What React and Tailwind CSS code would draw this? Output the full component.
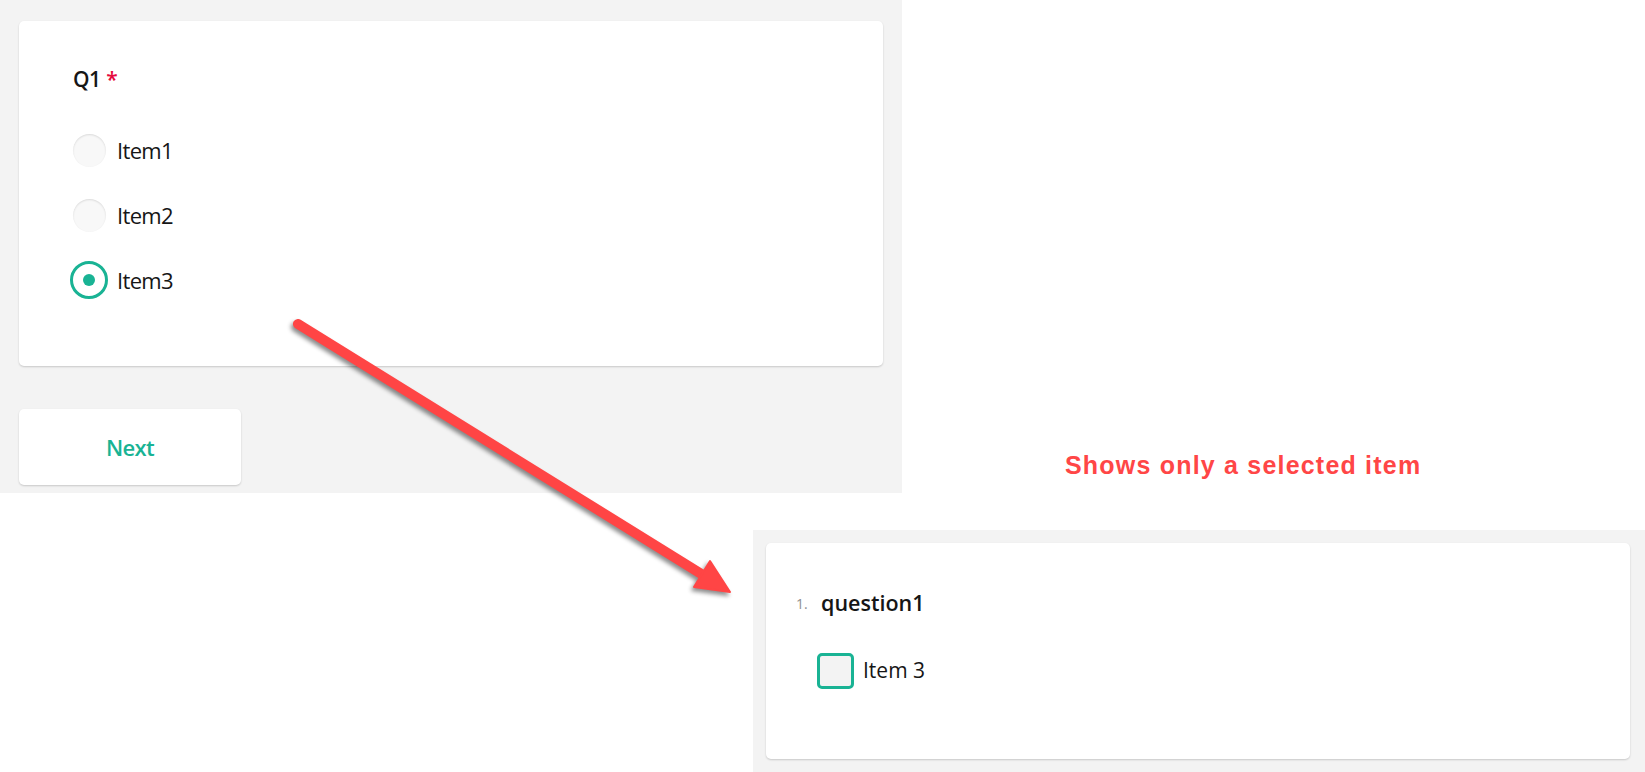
import React from "react";

const surveyFont = { fontFamily: '"Open Sans", "Noto Sans", sans-serif' };

function RadioItem({ label, checked }) {
  return (
    <div className="flex h-[38px] items-center gap-[9px]">
      <div className="flex h-[38px] w-[38px] items-center justify-center">
        {checked ? (
          <div className="flex h-[38px] w-[38px] items-center justify-center rounded-full border-[3px] border-[#19b394] bg-white">
            <div className="h-[12px] w-[12px] rounded-full bg-[#19b394]" />
          </div>
        ) : (
          <div className="h-[33px] w-[33px] rounded-full bg-[#f8f8f8] shadow-[inset_0_1px_2px_rgba(0,0,0,0.12)]" />
        )}
      </div>
      <span className="text-[22px] leading-[30px] tracking-[-0.03em] text-[#161616]">{label}</span>
    </div>
  );
}

function Arrow() {
  return (
    <svg
      className="pointer-events-none absolute left-0 top-0 drop-shadow-[-2px_3px_2px_rgba(0,0,0,0.45)]"
      width="1645"
      height="772"
      viewBox="0 0 1645 772"
    >
      <line x1="298" y1="324" x2="703" y2="575" stroke="#ff4545" strokeWidth="10" strokeLinecap="round" />
      <polygon points="730,592 694,587 710,561" fill="#ff4545" stroke="#ff4545" strokeWidth="2" strokeLinejoin="round" />
    </svg>
  );
}

export default function App() {
  return (
    <div className="relative h-[772px] w-[1645px] overflow-hidden bg-white" style={surveyFont}>
      <div className="flex">
        {/* survey page */}
        <div className="flex h-[493px] w-[902px] flex-col bg-[#f3f3f3] pl-[19px] pt-[21px]">
          <div className="flex h-[345px] w-[864px] flex-col rounded-[5px] bg-white pl-[51px] pt-[44px] shadow-[0_1px_2px_rgba(0,0,0,0.18)]">
            <div className="ml-[3px] flex h-[30px] items-center text-[21px] font-semibold tracking-[-0.03em] text-[#161616]">
              Q1
              <span className="ml-[6px] text-[#e50a3e]">*</span>
            </div>
            <div className="mt-[36px] flex flex-col gap-[27px]">
              <RadioItem label="Item1" />
              <RadioItem label="Item2" />
              <RadioItem label="Item3" checked />
            </div>
          </div>
          <button className="mt-[43px] flex h-[76px] w-[222px] items-center justify-center rounded-[5px] bg-white text-[22px] font-semibold tracking-[-0.03em] text-[#19b394] shadow-[0_1px_2px_rgba(0,0,0,0.18)]">
            Next
          </button>
        </div>

        <div className="flex-1 pl-[163px] pt-[451px]">
          <p
            className="whitespace-nowrap text-[25px] font-bold leading-[29px] tracking-[1.2px] text-[#ff4646]"
            style={{ fontFamily: '"Liberation Sans", Arial, sans-serif' }}
          >
            Shows only a selected item
          </p>
        </div>
      </div>

      {/* display mode result */}
      <div className="ml-[753px] mt-[37px] h-[242px] w-[892px] bg-[#f3f3f3] pl-[13px] pt-[13px]">
        <div className="flex h-[216px] w-[864px] flex-col rounded-[5px] bg-white pl-[30px] pt-[45px] shadow-[0_1px_2px_rgba(0,0,0,0.18)]">
          <div className="flex h-[30px] items-center">
            <span className="w-[25px] text-[14px] text-[#909090]">1.</span>
            <span className="text-[21.5px] font-semibold text-[#161616]">question1</span>
          </div>
          <div className="ml-[21px] mt-[35px] flex h-[36px] items-center gap-[9px]">
            <div className="h-[36px] w-[37px] rounded-[5px] border-[3px] border-[#19b394] bg-[#f3f3f3]" />
            <span className="text-[21px] text-[#161616]">Item 3</span>
          </div>
        </div>
      </div>

      <Arrow />
    </div>
  );
}
